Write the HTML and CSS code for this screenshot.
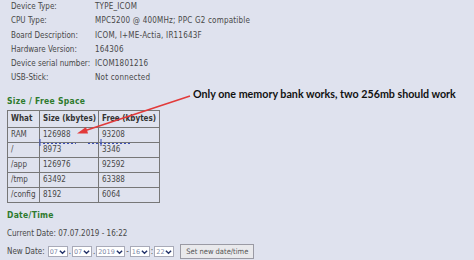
FILE: index.html
```html
<!DOCTYPE html>
<html lang="en">
<head>
    <meta charset="UTF-8">
    <title>Device Info</title>
    <link rel="stylesheet" href="styles.css">
</head>
<body>
    <div id="page">
        <div class="info">
            <span>Device Type:</span><span>TYPE_ICOM</span>
            <span>CPU Type:</span><span>MPC5200 @ 400MHz; PPC G2 compatible</span>
            <span>Board Description:</span><span>ICOM, I+ME-Actia, IR11643F</span>
            <span>Hardware Version:</span><span>164306</span>
            <span>Device serial number:</span><span>ICOM1801216</span>
            <span>USB-Stick:</span><span>Not connected</span>
        </div>

        <h2 class="section-title space-title">Size / Free Space</h2>
        <table class="mem-table">
            <tr><th class="c-what">What</th><th class="c-size">Size (kbytes)</th><th class="c-free">Free (kbytes)</th></tr>
            <tr><td>RAM</td><td>126988</td><td>93208</td></tr>
            <tr><td>/</td><td>8973</td><td>3346</td></tr>
            <tr><td>/app</td><td>126976</td><td>92592</td></tr>
            <tr><td>/tmp</td><td>63492</td><td>63388</td></tr>
            <tr><td>/config</td><td>8192</td><td>6064</td></tr>
        </table>

        <h2 class="section-title date-title">Date/Time</h2>
        <p class="current-date">Current Date: 07.07.2019 - 16:22</p>
        <div class="date-form">
            <span class="lbl">New Date:</span>
            <span class="sel sel-small"><select><option>07</option></select><svg viewBox="0 0 8 6"><path d="M1 1.5l3 3 3-3" /></svg></span>
            <span>.</span>
            <span class="sel sel-small"><select><option>07</option></select><svg viewBox="0 0 8 6"><path d="M1 1.5l3 3 3-3" /></svg></span>
            <span>.</span>
            <span class="sel sel-year"><select><option>2019</option></select><svg viewBox="0 0 8 6"><path d="M1 1.5l3 3 3-3" /></svg></span>
            <span>-</span>
            <span class="sel sel-small"><select><option>16</option></select><svg viewBox="0 0 8 6"><path d="M1 1.5l3 3 3-3" /></svg></span>
            <span>:</span>
            <span class="sel sel-small"><select><option>22</option></select><svg viewBox="0 0 8 6"><path d="M1 1.5l3 3 3-3" /></svg></span>
            <button class="set-btn">Set new date/time</button>
        </div>

        <!-- screenshot annotation -->
        <div class="note">Only one memory bank works, two 256mb should work</div>
        <svg class="arrow" width="474" height="260" viewBox="0 0 474 260">
            <line x1="190" y1="96" x2="84" y2="131" stroke="#e23a3a" stroke-width="1.6" />
            <path d="M77 133.5 L86 127 L88 133.5 Z" fill="#e23a3a" />
            <g stroke="#3b4fb8" stroke-width="1" fill="none">
                <path d="M40 139v7M101 139v7" />
                <path d="M43 143.5h33M88 143.5h42" stroke-dasharray="2 2" />
            </g>
        </svg>
    </div>
</body>
</html>
```

FILE: styles.css
```css
* {
    margin: 0;
    padding: 0;
    box-sizing: border-box;
}

body, html {
    width: 100%;
    height: 100%;
    overflow: hidden;
    background-color: #dfe2ee;
    color: #484848;
    font-family: "DejaVu Sans Condensed", "DejaVu Sans", Verdana, sans-serif;
    font-stretch: condensed;
    font-size: 8px;
}

#page {
    position: relative;
    width: 474px;
    height: 260px;
    padding: 0 7px;
}

.info {
    display: grid;
    grid-template-columns: 84px auto;
    padding-left: 4px;
    line-height: 14.3px;
    white-space: nowrap;
}

.info span:nth-child(even) {
    letter-spacing: 0.2px;
}

.section-title {
    color: #2d7a2d;
    font-size: 8.5px;
    font-weight: bold;
    letter-spacing: 0.3px;
    white-space: nowrap;
}

.space-title {
    margin-top: 8px;
    line-height: 14px;
}

.mem-table {
    margin-top: 2px;
    border-collapse: collapse;
    border: 1px solid #666;
    table-layout: fixed;
    width: 152px;
}

.mem-table th,
.mem-table td {
    border: 1px solid #777;
    text-align: left;
    padding: 0 3px;
    height: 15px;
    line-height: 13px;
    font-weight: normal;
    white-space: nowrap;
    overflow: hidden;
}

.mem-table th {
    font-weight: bold;
    color: #333;
    height: 17px;
}

.c-what { width: 32px; }
.c-size { width: 59px; }
.c-free { width: 61px; }

.date-title {
    margin-top: 5px;
    line-height: 14px;
}

.current-date {
    margin-top: 5px;
    line-height: 14px;
    white-space: nowrap;
}

.date-form {
    display: flex;
    align-items: center;
    gap: 1px;
    margin-top: 3px;
    height: 16px;
    white-space: nowrap;
}

.date-form .lbl {
    margin-right: 2px;
}

.sel {
    display: inline-flex;
    align-items: center;
    height: 11px;
    background-color: #fff;
    border: 1px solid #a8aab8;
    padding: 0 1px;
}

.sel select {
    appearance: none;
    border: none;
    background: transparent;
    color: #7f8aa8;
    font-family: "DejaVu Sans", Verdana, sans-serif;
    font-size: 6.5px;
    padding: 0;
}

.sel-small select { width: 9px; }
.sel-year select { width: 18px; }

.sel svg {
    width: 7px;
    height: 6px;
    stroke: #23336a;
    stroke-width: 1.6;
    fill: none;
}

.set-btn {
    margin-left: 5px;
    height: 15px;
    padding: 0 5px;
    background-color: #e9e9ec;
    border: 1px solid #9a9aa4;
    color: #555;
    font-family: "DejaVu Sans Condensed", "DejaVu Sans", Verdana, sans-serif;
    font-stretch: condensed;
    font-size: 7.5px;
    white-space: nowrap;
}

.note {
    position: absolute;
    left: 193px;
    top: 87px;
    font-family: Lato, "Liberation Sans", sans-serif;
    font-weight: bold;
    font-size: 10.7px;
    color: #111;
    white-space: nowrap;
}

.arrow {
    position: absolute;
    left: 0;
    top: 0;
    pointer-events: none;
}
```
